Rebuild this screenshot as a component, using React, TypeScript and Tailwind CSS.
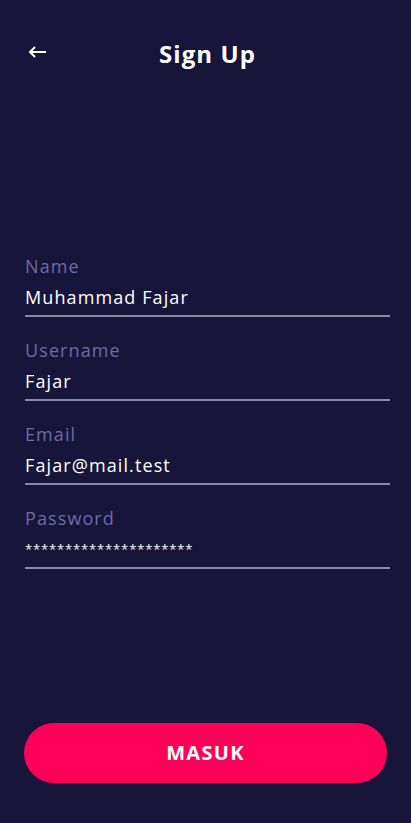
const fields = [
  { label: 'Name', value: 'Muhammad Fajar' },
  { label: 'Username', value: 'Fajar' },
  { label: 'Email', value: 'Fajar@mail.test' },
  { label: 'Password', value: '*********************', secret: true },
];

const App = () => {
  return (
    <div
      className="min-h-screen bg-[#17163a] flex flex-col pl-[25px] pr-[21px] text-white"
      style={{ fontFamily: '"Open Sans", "Noto Sans", sans-serif' }}
    >
      <header className="relative h-[108px] flex items-center justify-center">
        <button className="absolute left-[3px] top-[44px] w-[22px] h-[16px] flex items-center">
          <svg width="19" height="12" viewBox="0 0 19 12" fill="none" stroke="white" strokeWidth="2">
            <path d="M18 6H2" />
            <path d="M7 1L2 6l5 5" />
          </svg>
        </button>
        <h1 className="text-[24px] font-bold tracking-[1.1px]">Sign Up</h1>
      </header>

      <div className="mt-[147px] flex flex-col gap-[22px]">
        {fields.map((f) => (
          <div key={f.label} className="flex flex-col">
            <label className="text-[18px] leading-[22px] text-[#6e69a8] tracking-[1.1px]">{f.label}</label>
            <div className="mt-[8px] pb-[6px] border-b-2 border-[#8b88a6]">
              {f.secret ? (
                <span className="block h-[24px] text-[13px] leading-[24px] tracking-[0.85px]">{f.value}</span>
              ) : (
                <span className="block h-[24px] text-[18px] leading-[24px] tracking-[1.1px]">{f.value}</span>
              )}
            </div>
          </div>
        ))}
      </div>

      <div className="mt-auto mb-[40px] -ml-[1px]">
        <button className="w-[363px] h-[60px] rounded-full bg-[#ff0059] text-white text-[20px] font-bold tracking-[1.3px]">
          MASUK
        </button>
      </div>
    </div>
  );
};

export default App;
